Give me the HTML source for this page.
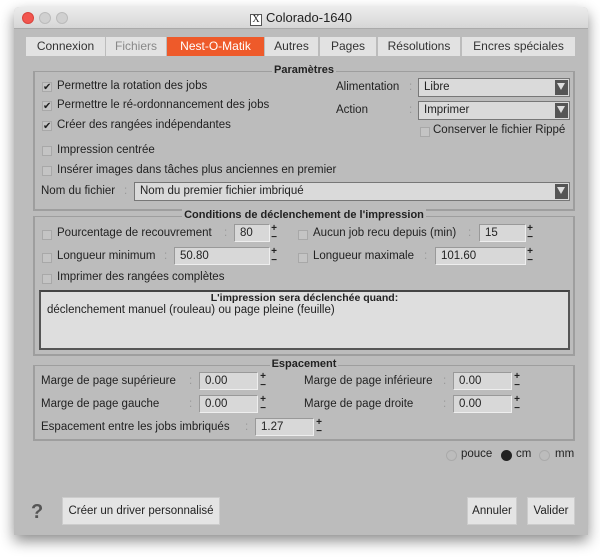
<!DOCTYPE html>
<html><head><meta charset="utf-8"><style>
*{box-sizing:border-box;margin:0;padding:0}
body{width:600px;height:557px;background:#fff;font-family:"Liberation Sans",sans-serif;font-size:11.5px;color:#222;position:relative;overflow:hidden}
.a{position:absolute;white-space:nowrap}
#win{position:absolute;left:14px;top:7px;width:574px;height:528px;background:#bcbcbc;box-shadow:0 6px 14px rgba(0,0,0,.45);border-radius:5px 5px 0 0;overflow:hidden}
#title{position:absolute;left:0;top:0;width:574px;height:22px;background:linear-gradient(#ececec,#d6d6d6);border-bottom:1px solid #aaa;text-align:center;font-size:13px;line-height:22px;color:#222}
.dot{position:absolute;top:5px;width:12px;height:12px;border-radius:50%;background:#d0d0d0;border:1px solid #bbb}
.tab{position:absolute;top:30px;height:19px;background:#e2e2e2;text-align:center;line-height:19px;font-size:12px;color:#333}
.grp{position:absolute;border:2px solid #9e9e9e;border-top-width:1px}
.gt{position:absolute;top:-8px;left:0;right:0;text-align:center;font-weight:bold;font-size:11px}
.gt span{background:#bcbcbc;padding:0 2px}
.cb{position:absolute;width:10px;height:10px;border:1px solid #a8a8a8;background:#c4c4c4}
.ck{position:absolute;width:10px;height:10px;border:1px solid #a8a8a8;background:#c4c4c4;font-size:10px;line-height:9px;text-align:center;color:#222}
.fld{position:absolute;height:18px;background:#d8d8d8;border-top:1px solid #999;border-left:1px solid #999;border-bottom:1px solid #eee;border-right:1px solid #eee;padding-left:5px;line-height:16px}
.sel{position:absolute;height:19px;background:#dadada;border:1px solid #777;padding-left:5px;line-height:17px}
.arr{position:absolute;right:1px;top:1px;width:13px;height:15px;background:#555;}
.arr:after{content:"";position:absolute;left:2px;top:3px;border-left:4.5px solid transparent;border-right:4.5px solid transparent;border-top:7px solid #ddd}
.sp{position:absolute;width:6px;font-size:10px;line-height:9px;font-weight:bold;text-align:center}
.btn{position:absolute;height:28px;background:#e4e4e4;border:1px solid #ccc;text-align:center;line-height:26px;font-size:11.5px}
.rd{position:absolute;width:11px;height:11px;border-radius:50%;border:1px solid #aaa;background:#bcbcbc}
</style></head><body>
<div id="win">
<div id="title"><span style="display:inline-block;width:12px;height:12px;border:1px solid #555;font-size:10px;line-height:10px;background:#fff;margin-right:4px;font-family:'Liberation Serif'">X</span>Colorado-1640</div>
<div class="dot" style="left:8px;background:#f2564f;border-color:#d9443d"></div>
<div class="dot" style="left:25px"></div>
<div class="dot" style="left:42px"></div>

<div class="tab" style="left:12px;width:79px">Connexion</div>
<div class="tab" style="left:92px;width:60px;color:#888">Fichiers</div>
<div class="tab" style="left:153px;width:97px;background:#ee5a2a;color:#fff">Nest-O-Matik</div>
<div class="tab" style="left:251px;width:53px">Autres</div>
<div class="tab" style="left:306px;width:56px">Pages</div>
<div class="tab" style="left:364px;width:82px">Résolutions</div>
<div class="tab" style="left:448px;width:113px">Encres spéciales</div>

<div class="grp" style="left:19px;top:64px;width:542px;height:140px"><div class="gt"><span>Paramètres</span></div></div>
<div class="grp" style="left:19px;top:209px;width:542px;height:140px"><div class="gt"><span>Conditions de déclenchement de l'impression</span></div></div>
<div class="grp" style="left:19px;top:358px;width:542px;height:76px"><div class="gt"><span>Espacement</span></div></div>
</div>

<!-- Paramètres -->
<div class="ck" style="left:42px;top:82px">✔</div><div class="a" style="left:57px;top:80px">Permettre la rotation des jobs</div>
<div class="ck" style="left:42px;top:101px">✔</div><div class="a" style="left:57px;top:99px">Permettre le ré-ordonnancement des jobs</div>
<div class="ck" style="left:42px;top:121px">✔</div><div class="a" style="left:57px;top:119px">Créer des rangées indépendantes</div>
<div class="a" style="left:336px;top:81px">Alimentation</div><div class="a" style="left:409px;top:81px;color:#999">:</div>
<div class="sel" style="left:418px;top:78px;width:152px">Libre<div class="arr"></div></div>
<div class="a" style="left:336px;top:104px">Action</div><div class="a" style="left:409px;top:104px;color:#999">:</div>
<div class="sel" style="left:418px;top:101px;width:152px">Imprimer<div class="arr"></div></div>
<div class="cb" style="left:420px;top:127px"></div><div class="a" style="left:433px;top:124px">Conserver le fichier Rippé</div>
<div class="cb" style="left:42px;top:146px"></div><div class="a" style="left:57px;top:144px">Impression centrée</div>
<div class="cb" style="left:42px;top:166px"></div><div class="a" style="left:57px;top:164px">Insérer images dans tâches plus anciennes en premier</div>
<div class="a" style="left:41px;top:185px">Nom du fichier</div><div class="a" style="left:124px;top:185px;color:#999">:</div>
<div class="sel" style="left:134px;top:182px;width:436px">Nom du premier fichier imbriqué<div class="arr"></div></div>

<!-- Conditions -->
<div class="cb" style="left:42px;top:230px"></div><div class="a" style="left:57px;top:227px">Pourcentage de recouvrement</div><div class="a" style="left:224px;top:227px;color:#999">:</div>
<div class="fld" style="left:234px;top:224px;width:36px">80</div><div class="sp" style="left:271px;top:224px">+<br>−</div>
<div class="cb" style="left:298px;top:230px"></div><div class="a" style="left:313px;top:227px">Aucun job recu depuis (min)</div><div class="a" style="left:468px;top:227px;color:#999">:</div>
<div class="fld" style="left:479px;top:224px;width:47px">15</div><div class="sp" style="left:527px;top:224px">+<br>−</div>
<div class="cb" style="left:42px;top:253px"></div><div class="a" style="left:57px;top:250px">Longueur minimum</div><div class="a" style="left:164px;top:250px;color:#999">:</div>
<div class="fld" style="left:174px;top:247px;width:96px">50.80</div><div class="sp" style="left:271px;top:247px">+<br>−</div>
<div class="cb" style="left:298px;top:253px"></div><div class="a" style="left:313px;top:250px">Longueur maximale</div><div class="a" style="left:424px;top:250px;color:#999">:</div>
<div class="fld" style="left:435px;top:247px;width:91px">101.60</div><div class="sp" style="left:527px;top:247px">+<br>−</div>
<div class="cb" style="left:42px;top:274px"></div><div class="a" style="left:57px;top:271px">Imprimer des rangées complètes</div>
<div class="a" style="left:39px;top:290px;width:531px;height:60px;background:#dedede;border:2px solid #555;border-top-color:#444"></div>
<div class="a" style="left:39px;top:292px;width:531px;text-align:center;font-weight:bold;font-size:10.5px">L'impression sera déclenchée quand:</div>
<div class="a" style="left:47px;top:304px">déclenchement manuel (rouleau) ou page pleine (feuille)</div>

<!-- Espacement -->
<div class="a" style="left:41px;top:375px">Marge de page supérieure</div><div class="a" style="left:189px;top:375px;color:#999">:</div>
<div class="fld" style="left:199px;top:372px;width:59px">0.00</div><div class="sp" style="left:260px;top:372px">+<br>−</div>
<div class="a" style="left:304px;top:375px">Marge de page inférieure</div><div class="a" style="left:443px;top:375px;color:#999">:</div>
<div class="fld" style="left:453px;top:372px;width:59px">0.00</div><div class="sp" style="left:514px;top:372px">+<br>−</div>
<div class="a" style="left:41px;top:398px">Marge de page gauche</div><div class="a" style="left:189px;top:398px;color:#999">:</div>
<div class="fld" style="left:199px;top:395px;width:59px">0.00</div><div class="sp" style="left:260px;top:395px">+<br>−</div>
<div class="a" style="left:304px;top:398px">Marge de page droite</div><div class="a" style="left:443px;top:398px;color:#999">:</div>
<div class="fld" style="left:453px;top:395px;width:59px">0.00</div><div class="sp" style="left:514px;top:395px">+<br>−</div>
<div class="a" style="left:41px;top:421px">Espacement entre les jobs imbriqués</div><div class="a" style="left:245px;top:421px;color:#999">:</div>
<div class="fld" style="left:255px;top:418px;width:59px">1.27</div><div class="sp" style="left:316px;top:418px">+<br>−</div>

<!-- radios -->
<div class="rd" style="left:446px;top:450px"></div><div class="a" style="left:461px;top:448px">pouce</div>
<div class="rd" style="left:501px;top:450px;background:#222;border-color:#222"></div><div class="a" style="left:516px;top:448px">cm</div>
<div class="rd" style="left:539px;top:450px"></div><div class="a" style="left:555px;top:448px">mm</div>

<div class="a" style="left:31px;top:501px;font-size:20px;font-weight:bold;color:#555">?</div>
<div class="btn" style="left:62px;top:497px;width:158px">Créer un driver personnalisé</div>
<div class="btn" style="left:467px;top:497px;width:50px">Annuler</div>
<div class="btn" style="left:527px;top:497px;width:48px">Valider</div>
</body></html>
